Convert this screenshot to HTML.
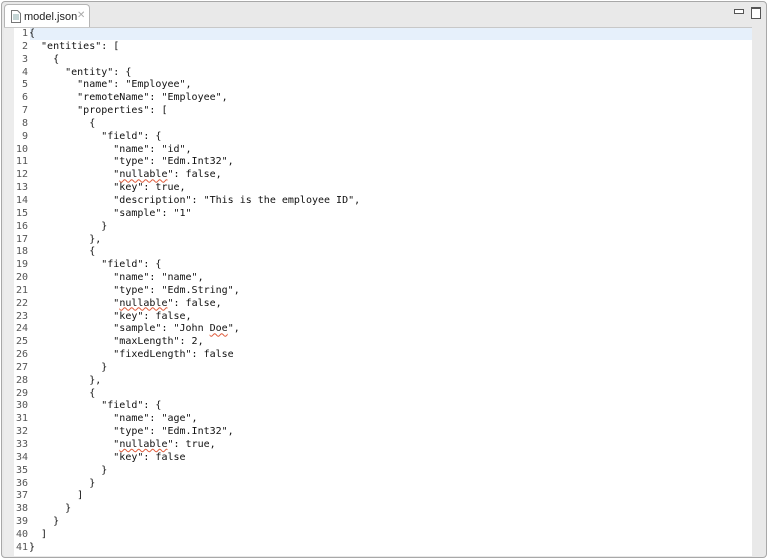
<!DOCTYPE html>
<html><head><style>
body{margin:0;width:768px;height:559px;background:#fff;overflow:hidden;font-family:"Liberation Sans",sans-serif}
.frame{position:absolute;left:1px;top:1px;width:764px;height:555px;border:1px solid #a8a8a8;border-radius:4px;background:#e9e9e9;overflow:hidden}
.tab{position:absolute;left:2px;top:2px;width:84px;height:24px;background:#fff;border:1px solid #b5b5b5;border-bottom:none;border-radius:4px 4px 0 0;font-size:11px;color:#222}
.tab span{position:absolute;left:19px;top:6px}
.tab .x{left:72px;top:5px;color:#aaa;font-size:10px}
.ed{position:absolute;left:2px;top:25px;width:748px;height:528px;background:#fff;border-top:1px solid #c8c8c8}
.gut{position:absolute;left:0;top:0;width:10px;height:100%;background:#ececec}
.hl{position:absolute;left:26px;top:0;width:722px;height:12px;background:#e6f0fb}
pre{position:absolute;margin:0;top:0;font-family:"DejaVu Sans Mono","Liberation Mono",monospace;font-size:10px;line-height:12.85px;color:#111}
.nums{left:8px;width:16px;text-align:right;color:#555}
.code{left:25px}
.sq{text-decoration:underline wavy #e05a3a;text-decoration-thickness:1px;text-underline-offset:1px}
</style></head><body>
<div class="frame">
<div class="tab"><svg style="position:absolute;left:6px;top:5px" width="10" height="13"><path d="M0.5 0.5h6l3 3v9h-9z" fill="#fff" stroke="#777"/><path d="M2 5h6M2 7h6M2 9h6" stroke="#8aa"/></svg><span>model.json</span><span class="x">✕</span></div>
<div style="position:absolute;left:732px;top:7px;width:8px;height:3px;border:1px solid #555;background:#fff"></div>
<div style="position:absolute;left:749px;top:5px;width:8px;height:9px;border:1px solid #555;border-top-width:2px;background:#fff"></div>
<div class="ed"><div class="gut"></div><div class="hl"></div>
<pre class="nums">1
2
3
4
5
6
7
8
9
10
11
12
13
14
15
16
17
18
19
20
21
22
23
24
25
26
27
28
29
30
31
32
33
34
35
36
37
38
39
40
41</pre>
<pre class="code">{
  "entities": [
    {
      "entity": {
        "name": "Employee",
        "remoteName": "Employee",
        "properties": [
          {
            "field": {
              "name": "id",
              "type": "Edm.Int32",
              "<span class="sq">nullable</span>": false,
              "key": true,
              "description": "This is the employee ID",
              "sample": "1"
            }
          },
          {
            "field": {
              "name": "name",
              "type": "Edm.String",
              "<span class="sq">nullable</span>": false,
              "key": false,
              "sample": "John <span class="sq">Doe</span>",
              "maxLength": 2,
              "fixedLength": false
            }
          },
          {
            "field": {
              "name": "age",
              "type": "Edm.Int32",
              "<span class="sq">nullable</span>": true,
              "key": false
            }
          }
        ]
      }
    }
  ]
}</pre>
</div>
</div>
</body></html>
